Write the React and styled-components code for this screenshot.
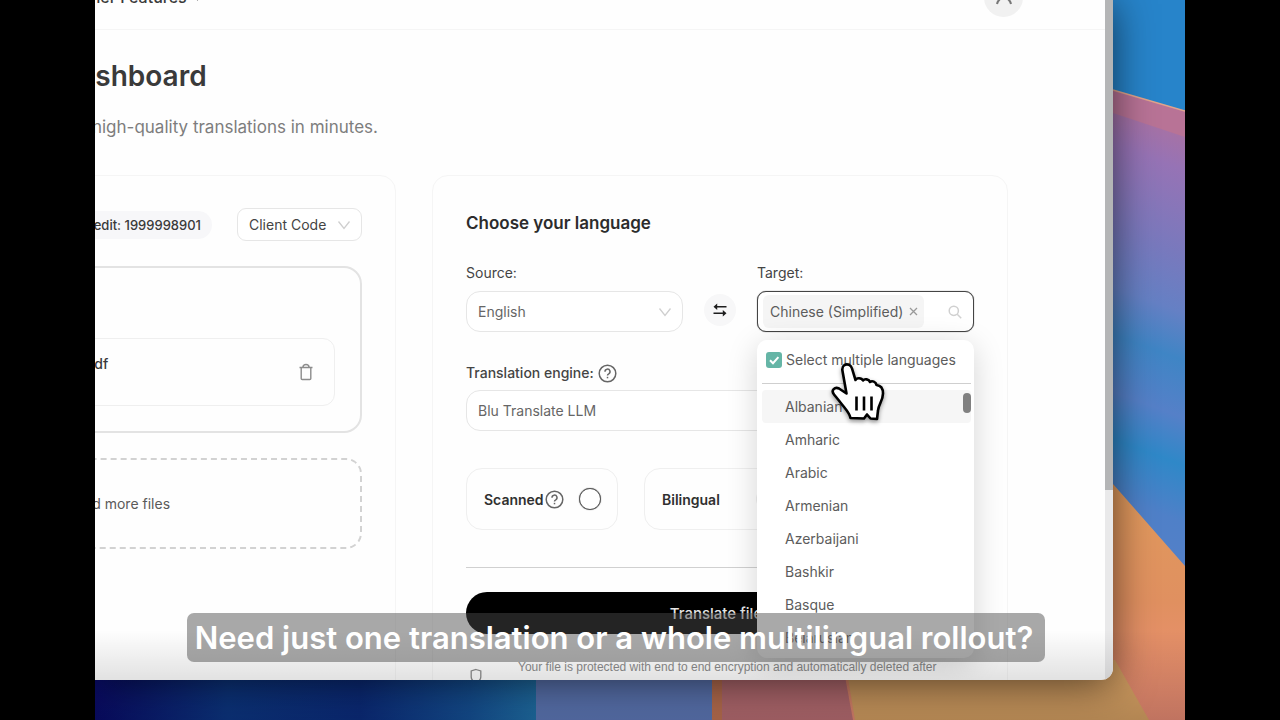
import React, { useState } from 'react'
import styled, { createGlobalStyle } from 'styled-components'

const GlobalStyle = createGlobalStyle`
  * {
    box-sizing: border-box;
  }
  body {
    margin: 0;
    background: #000;
    color: #3a3a3a;
    font-family: Inter, "Liberation Sans", sans-serif;
    font-size: 14px;
  }
  button, input, select {
    font: inherit;
    color: inherit;
  }
`

const Desktop = styled.div`
  position: relative;
  height: 100vh;
  margin: 0 95px;
  padding: 0 72px 40px 0;
  overflow: hidden;
`
const Wallpaper = styled.svg`
  position: absolute;
  inset: 0;
  width: 100%;
  height: 100%;
`
const WindowShadow = styled.div`
  position: relative;
  z-index: 0;
  height: 100%;
  border-radius: 0 0 12px 0;
  box-shadow: 0 4px 40px rgba(0, 0, 0, .6);
`
const Window = styled.div`
  display: flex;
  height: 100%;
  overflow: hidden;
  background: #fefefe;
  border-radius: 0 0 12px 0;
`
// The page is scrolled a little to the right and down.
const Page = styled.div`
  flex: 1;
  margin: -35px 0 0 -372px;
`
const ScrollTrack = styled.div`
  flex: none;
  width: 8px;
  background: #e9e9ea;
`
const ScrollThumb = styled.div`
  height: 72%;
  background: #b4b5b6;
`

const Header = styled.header`
  display: flex;
  align-items: center;
  justify-content: space-between;
  height: 65px;
  padding: 0 82px 0 350px;
  border-bottom: 1px solid #f5f5f5;
`
const NavButton = styled.button`
  display: flex;
  align-items: center;
  gap: 6px;
  padding: 0;
  border: 0;
  background: none;
  font-size: 16px;
  font-weight: 500;
`
const Avatar = styled.button`
  display: flex;
  align-items: center;
  justify-content: center;
  width: 39px;
  height: 39px;
  padding: 0;
  border: 0;
  border-radius: 50%;
  background: #f1f1f1;
`

const Main = styled.main`
  padding: 28px 97px 0;
`
const Hero = styled.div`
  padding-left: 239px;
`
const Title = styled.h1`
  margin: 0;
  font-size: 28px;
  font-weight: 600;
  line-height: 36px;
  color: #3a3a3a;
`
const Subtitle = styled.p`
  margin: 21px 0 36px;
  font-size: 17px;
  line-height: 24px;
  color: #7d7d7d;
`
const Columns = styled.div`
  display: grid;
  grid-template-columns: 1fr 1fr;
  gap: 36px;
`
const Card = styled.section`
  padding: 32px 33px 60px;
  border: 1px solid #f5f5f5;
  border-radius: 16px;
  min-height: 560px;
`

const Toolbar = styled.div`
  display: flex;
  align-items: center;
  justify-content: flex-end;
  gap: 25px;
`
const Credit = styled.span`
  padding: 0 11px;
  border-radius: 14px;
  background: #f7f7f9;
  font-size: 13px;
  font-weight: 500;
  line-height: 28px;
`
const SelectBox = styled.div`
  position: relative;
  width: ${({ $width }) => $width || '100%'};
  svg {
    position: absolute;
    right: 11px;
    top: 0;
    bottom: 0;
    margin: auto;
    pointer-events: none;
  }
`
const Select = styled.select`
  width: 100%;
  height: ${({ $small }) => ($small ? '33px' : '41px')};
  padding: 0 11px;
  appearance: none;
  border: 1px solid #e6e6e6;
  border-radius: ${({ $small }) => ($small ? '9px' : '14px')};
  background: #fff;
  color: ${({ $small }) => ($small ? '#444' : '#666')};
`
const FileList = styled.div`
  margin-top: 25px;
  padding: 70px 25px 25px;
  border: 2px solid #e3e3e3;
  border-radius: 18px;
`
const FileItem = styled.div`
  display: flex;
  align-items: flex-start;
  justify-content: space-between;
  height: 68px;
  padding: 15px 21px 0 132px;
  border: 1px solid #efefef;
  border-radius: 12px;
  font-weight: 500;
  line-height: 20px;
`
const IconButton = styled.button`
  display: flex;
  align-self: center;
  padding: 0 0 15px;
  border: 0;
  background: none;
  color: #8c8c8c;
`
const AddFiles = styled.button`
  display: flex;
  align-items: center;
  justify-content: center;
  gap: 8px;
  width: 100%;
  height: 91px;
  margin-top: 25px;
  border: 2px dashed #d2d2d2;
  border-radius: 16px;
  background: none;
  color: #5a5a5a;
`

const CardTitle = styled.h2`
  margin: 0;
  padding-top: 3px;
  font-size: 17px;
  font-weight: 600;
  line-height: 24px;
  color: #2c2c2c;
`
const Languages = styled.div`
  display: grid;
  grid-template-columns: 1fr 74px 1fr;
  align-items: end;
  margin-top: 28px;
`
const Field = styled.div`
  position: relative;
  min-width: 0;
`
const Label = styled.label`
  display: flex;
  align-items: center;
  gap: 4px;
  margin-bottom: 8px;
  font-size: 14px;
  line-height: 20px;
  color: #444;
`
const EngineLabel = styled(Label)`
  margin: 31px 0 7px;
  font-weight: 500;
`
const Swap = styled.button`
  display: flex;
  align-items: center;
  justify-content: center;
  justify-self: center;
  width: 32px;
  height: 32px;
  margin-bottom: 6px;
  padding: 0;
  border: 0;
  border-radius: 50%;
  background: #f7f7f8;
  color: #1d1d1d;
`
const TargetBox = styled.div`
  display: flex;
  align-items: center;
  height: 41px;
  padding: 0 11px 0 5px;
  border: 1px solid #444;
  border-radius: 9px;
  background: #fff;
  box-shadow: 0 0 1px #555;
  color: #d0d0d0;
`
const Tag = styled.span`
  display: flex;
  align-items: center;
  gap: 6px;
  flex: none;
  height: 33px;
  padding: 0 6px 0 7px;
  border-radius: 6px;
  background: #f5f5f5;
  color: #5c5c5c;
  button {
    display: flex;
    padding: 0;
    border: 0;
    background: none;
    color: #999;
  }
`
const SearchInput = styled.input`
  flex: 1;
  min-width: 0;
  border: 0;
  outline: 0;
  background: none;
`

const Menu = styled.div`
  position: absolute;
  z-index: 2;
  top: 100%;
  left: 0;
  right: 0;
  margin-top: 8px;
  padding: 6px 3px 4px 5px;
  border-radius: 10px;
  background: #fff;
  box-shadow: 0 6px 30px rgba(0, 0, 0, .17);
`
const Multiple = styled.label`
  display: flex;
  align-items: center;
  gap: 4px;
  height: 38px;
  padding: 0 0 10px 4px;
  border-bottom: 1px solid #cfcfcf;
  white-space: nowrap;
  color: #5c5c5c;
`
const Check = styled.input`
  appearance: none;
  width: 16px;
  height: 16px;
  margin: 0;
  border-radius: 3px;
  border: 1px solid #bbb;
  &:checked {
    border: 0;
    background: #65b5a6 url("data:image/svg+xml,%3Csvg xmlns='http://www.w3.org/2000/svg' viewBox='0 0 16 16'%3E%3Cpath d='M4 8.2l3 3 5.4-6' fill='none' stroke='white' stroke-width='2'/%3E%3C/svg%3E");
  }
`
const OptionArea = styled.div`
  position: relative;
  height: 264px;
  margin-top: 6px;
  overflow: hidden;
`
const Options = styled.ul`
  margin: 0;
  padding: 0;
  list-style: none;
`
const Option = styled.li`
  padding-left: 23px;
  border-radius: 4px;
  background: ${({ $active }) => ($active ? '#f6f6f6' : 'none')};
  font-size: 14px;
  line-height: 33px;
  color: #5c5c5c;
`
const MenuThumb = styled.div`
  position: absolute;
  top: 3px;
  right: 0;
  width: 8px;
  height: 20px;
  border-radius: 4px;
  background: #808080;
`

const Toggles = styled.div`
  display: flex;
  gap: 26px;
  margin-top: 37px;
`
const Toggle = styled.label`
  display: flex;
  align-items: center;
  justify-content: space-between;
  width: 152px;
  height: 62px;
  padding: 0 16px 0 17px;
  border: 1px solid #efefef;
  border-radius: 16px;
  font-weight: 600;
  color: #303030;
  span {
    display: flex;
    align-items: center;
    gap: 1px;
  }
`
const Radio = styled.input`
  appearance: none;
  width: 22px;
  height: 22px;
  margin: 0;
  border: 1px solid #555;
  border-radius: 50%;
  background: #fff;
  box-shadow: 0 0 1px #555;
`
const Divider = styled.hr`
  margin: 37px 0 24px;
  border: 0;
  border-top: 1px solid #d0d0d0;
`
const Submit = styled.button`
  display: block;
  width: 100%;
  height: 42px;
  border: 0;
  border-radius: 21px;
  background: #000;
  font-size: 15px;
  font-weight: 500;
  color: #e6e6e6;
`
const Note = styled.p`
  display: flex;
  align-items: center;
  gap: 36px;
  height: 36px;
  margin: 24px 0 0;
  padding-left: 4px;
  font-family: "Liberation Sans", sans-serif;
  font-size: 12px;
  line-height: 18px;
  color: #8c8c8c;
  span {
    align-self: flex-start;
  }
`

const Shade = styled.div`
  position: absolute;
  left: 0;
  right: 0;
  bottom: 0;
  height: 90px;
  background: linear-gradient(transparent, rgba(0, 0, 0, .2));
`
const CaptionLayer = styled.div`
  position: absolute;
  left: 0;
  right: 0;
  bottom: 58px;
  display: flex;
  justify-content: center;
`
const Caption = styled.p`
  margin: 0 0 0 -48px;
  padding: 0 12px 0 8px;
  border-radius: 7px;
  background: rgba(75, 75, 75, .48);
  font-size: 31px;
  font-weight: 600;
  line-height: 49px;
  white-space: nowrap;
  color: #fff;
`
const Hand = styled.svg`
  position: absolute;
  z-index: 3;
  left: 74px;
  top: 99px;
  filter: drop-shadow(0 2px 2px rgba(0, 0, 0, .4));
`

const Chevron = ({ size = 14, color = '#cfcfcf', width = 1.3 }) => (
  <svg width={size} height={size} viewBox="0 0 14 14" fill="none" stroke={color} strokeWidth={width}>
    <path d="M1.500 3.500L7 10.500l5.500-7" />
  </svg>
)

const HelpIcon = () => (
  <svg width="19" height="19" viewBox="0 0 19 19" fill="none" stroke="#666" strokeWidth="1.500">
    <circle cx="9.500" cy="9.500" r="8.300" />
    <path d="M7 7.700a2.500 2.500 0 1 1 3.700 2.100c-.8.400-1.200.8-1.200 1.700" />
    <path d="M9.500 12.800v1.500" />
  </svg>
)

const TrashIcon = () => (
  <svg width="14" height="18" viewBox="0 0 14 18" fill="none" stroke="currentColor" strokeWidth="1.400">
    <path d="M.5 4.500h13M2.200 4.500v11q0 1 1 1h7.600q1 0 1-1v-11M3.800 4.500q.3-3 3.200-3t3.200 3" />
  </svg>
)

const SwapIcon = () => (
  <svg width="16" height="16" viewBox="0 0 16 16" fill="none" stroke="currentColor" strokeWidth="1.500">
    <path d="M14.500 4.700H3M13 11.300H1.500" />
    <path d="M5.200 1.500L1.500 4.700l3.700 3.200zM10.800 8.100l3.700 3.200-3.700 3.200z" fill="currentColor" stroke="none" />
  </svg>
)

const HandCursor = () => (
  <Hand width="54" height="62" viewBox="0 0 54 62" aria-hidden="true">
    <path
      d="M13.500 3c3-1.500 6.500 0 7.500 3.500l3.500 11.500c1-2.500 6-2.500 7.500.5 1.500-2 6-1.500 7 1.500 2-1.500 6-.5 6.500 3 5 .5 6.500 4 6.500 8.500 0 7-4.500 11-5 17l-1 8.500-6.500-.5-3.500-4-3 4-13.500-.5c-1-5-5-9-8.500-13.500C8 38.500 5 35 3 32.500-.5 28 4 24.500 8 26.500l7.500 5L11.500 9c-.5-2.500.5-5 2-6z"
      fill="#fff" stroke="#000" strokeWidth="2.600" strokeLinejoin="round"
    />
    <path d="M25.500 34.500v14M33 34.500v14M40.500 34.500v14" stroke="#000" strokeWidth="2.600" />
  </Hand>
)

const Scenery = () => (
  <Wallpaper viewBox="0 0 1090 720" preserveAspectRatio="none" aria-hidden="true">
    <defs>
      <linearGradient id="violet" gradientUnits="userSpaceOnUse" x1="1054" y1="100" x2="900" y2="520">
        <stop offset="0" stopColor="#b0719b" />
        <stop offset=".12" stopColor="#9673b5" />
        <stop offset=".3" stopColor="#7879bd" />
        <stop offset=".42" stopColor="#6580c4" />
        <stop offset=".52" stopColor="#3f85c5" />
        <stop offset=".64" stopColor="#5580c8" />
        <stop offset=".74" stopColor="#2f88c8" />
        <stop offset=".86" stopColor="#4f80c8" />
        <stop offset="1" stopColor="#5580c8" />
      </linearGradient>
      <linearGradient id="sand" x1="0" y1="0" x2="0" y2="1">
        <stop offset="0" stopColor="#e09a5c" />
        <stop offset=".5" stopColor="#e09060" />
        <stop offset="1" stopColor="#f09078" />
      </linearGradient>
      <linearGradient id="sea" x1="0" y1="0" x2="1" y2="0">
        <stop offset="0" stopColor="#0a0c70" />
        <stop offset=".3" stopColor="#0d3a8c" />
        <stop offset=".6" stopColor="#0c2f86" />
        <stop offset=".85" stopColor="#1656a0" />
        <stop offset="1" stopColor="#2278b4" />
      </linearGradient>
    </defs>
    <rect width="1090" height="720" fill="#2784ca" />
    <path d="M1018 90l72 21v460l-72-86z" fill="url(#violet)" />
    <path d="M1018 90l72 21v26l-72-24z" fill="#b87396" />
    <path d="M1018 90l72 21" stroke="#e0a48c" strokeWidth="1.500" />
    <path d="M1018 484l72 82v154H750v-60h268z" fill="url(#sand)" />
    <path d="M750 660h270l34 60H760z" fill="#e0a868" />
    <path d="M0 660h441v60H0z" fill="url(#sea)" />
    <path d="M441 660h176v60H441z" fill="#6480c4" />
    <path d="M617 660h130l11 60H617z" fill="#c4747a" />
    <path d="M617 660h10v60h-10z" fill="#cc7a58" />
  </Wallpaper>
)

const languages = ['Albanian', 'Amharic', 'Arabic', 'Armenian', 'Azerbaijani', 'Bashkir', 'Basque', 'Belarusian']

function TargetField() {
  const [multiple, setMultiple] = useState(true)
  return (
    <Field>
      <Label htmlFor="target">Target:</Label>
      <TargetBox>
        <Tag>
          Chinese (Simplified)
          <button type="button" aria-label="Remove">
            <svg width="9" height="9" viewBox="0 0 9 9" stroke="currentColor" strokeWidth="1.300">
              <path d="M1 1l7 7M8 1L1 8" />
            </svg>
          </button>
        </Tag>
        <SearchInput id="target" />
        <svg width="14" height="14" viewBox="0 0 14 14" fill="none" stroke="currentColor" strokeWidth="1.500">
          <circle cx="5.800" cy="5.800" r="4.600" />
          <path d="M9.200 9.200l4 4" />
        </svg>
      </TargetBox>
      <Menu>
        <Multiple>
          <Check type="checkbox" checked={multiple} onChange={(e) => setMultiple(e.target.checked)} />
          Select multiple languages
        </Multiple>
        <OptionArea>
          <Options>
            {languages.map((name, i) => <Option key={name} $active={i === 0}>{name}</Option>)}
          </Options>
          <MenuThumb />
        </OptionArea>
      </Menu>
      <HandCursor />
    </Field>
  )
}

function FilesCard() {
  return (
    <Card>
      <Toolbar>
        <Credit>Credit: 1999998901</Credit>
        <SelectBox $width="125px">
          <Select $small aria-label="Client Code"><option>Client Code</option></Select>
          <Chevron />
        </SelectBox>
      </Toolbar>
      <FileList>
        <FileItem>
          document.pdf
          <IconButton aria-label="Delete file"><TrashIcon /></IconButton>
        </FileItem>
      </FileList>
      <AddFiles>
        <svg width="20" height="20" viewBox="0 0 20 20" stroke="currentColor" strokeWidth="1.500">
          <path d="M10 3v14M3 10h14" />
        </svg>
        Add more files
      </AddFiles>
    </Card>
  )
}

function LanguageCard() {
  return (
    <Card>
      <CardTitle>Choose your language</CardTitle>
      <Languages>
        <Field>
          <Label htmlFor="source">Source:</Label>
          <SelectBox>
            <Select id="source"><option>English</option></Select>
            <Chevron />
          </SelectBox>
        </Field>
        <Swap aria-label="Swap languages"><SwapIcon /></Swap>
        <TargetField />
      </Languages>
      <EngineLabel htmlFor="engine">Translation engine: <HelpIcon /></EngineLabel>
      <SelectBox>
        <Select id="engine"><option>Blu Translate LLM</option></Select>
        <Chevron />
      </SelectBox>
      <Toggles>
        <Toggle>
          <span>Scanned<HelpIcon /></span>
          <Radio type="radio" name="scanned" />
        </Toggle>
        <Toggle>
          <span>Bilingual</span>
          <Radio type="radio" name="bilingual" />
        </Toggle>
      </Toggles>
      <Divider />
      <Submit>Translate files</Submit>
      <Note>
        <svg width="12" height="16" viewBox="0 0 12 16" fill="none" stroke="currentColor" strokeWidth="1.300">
          <path d="M6 1.500l4.800 1.500v6q0 3.500-4.800 5.500Q1.200 12.500 1.200 9V3z" />
        </svg>
        <span>Your file is protected with end to end encryption and automatically deleted after</span>
      </Note>
    </Card>
  )
}

export default function App() {
  return (
    <>
      <GlobalStyle />
      <Desktop>
        <Scenery />
        <WindowShadow>
          <Window>
            <Page>
              <Header>
                <NavButton>Other Features <Chevron size={9} color="#555" width={2} /></NavButton>
                <Avatar aria-label="Account">
                  <svg width="20" height="24" viewBox="0 0 20 24" fill="none" stroke="#777" strokeWidth="2">
                    <circle cx="10" cy="6" r="5" />
                    <path d="M3 19q1-5 7-7 6 2 7 7" />
                  </svg>
                </Avatar>
              </Header>
              <Main>
                <Hero>
                  <Title>Dashboard</Title>
                  <Subtitle>Get high-quality translations in minutes.</Subtitle>
                </Hero>
                <Columns>
                  <FilesCard />
                  <LanguageCard />
                </Columns>
              </Main>
            </Page>
            <ScrollTrack><ScrollThumb /></ScrollTrack>
          </Window>
        </WindowShadow>
        <Shade />
        <CaptionLayer>
          <Caption>Need just one translation or a whole multilingual rollout?</Caption>
        </CaptionLayer>
      </Desktop>
    </>
  )
}
